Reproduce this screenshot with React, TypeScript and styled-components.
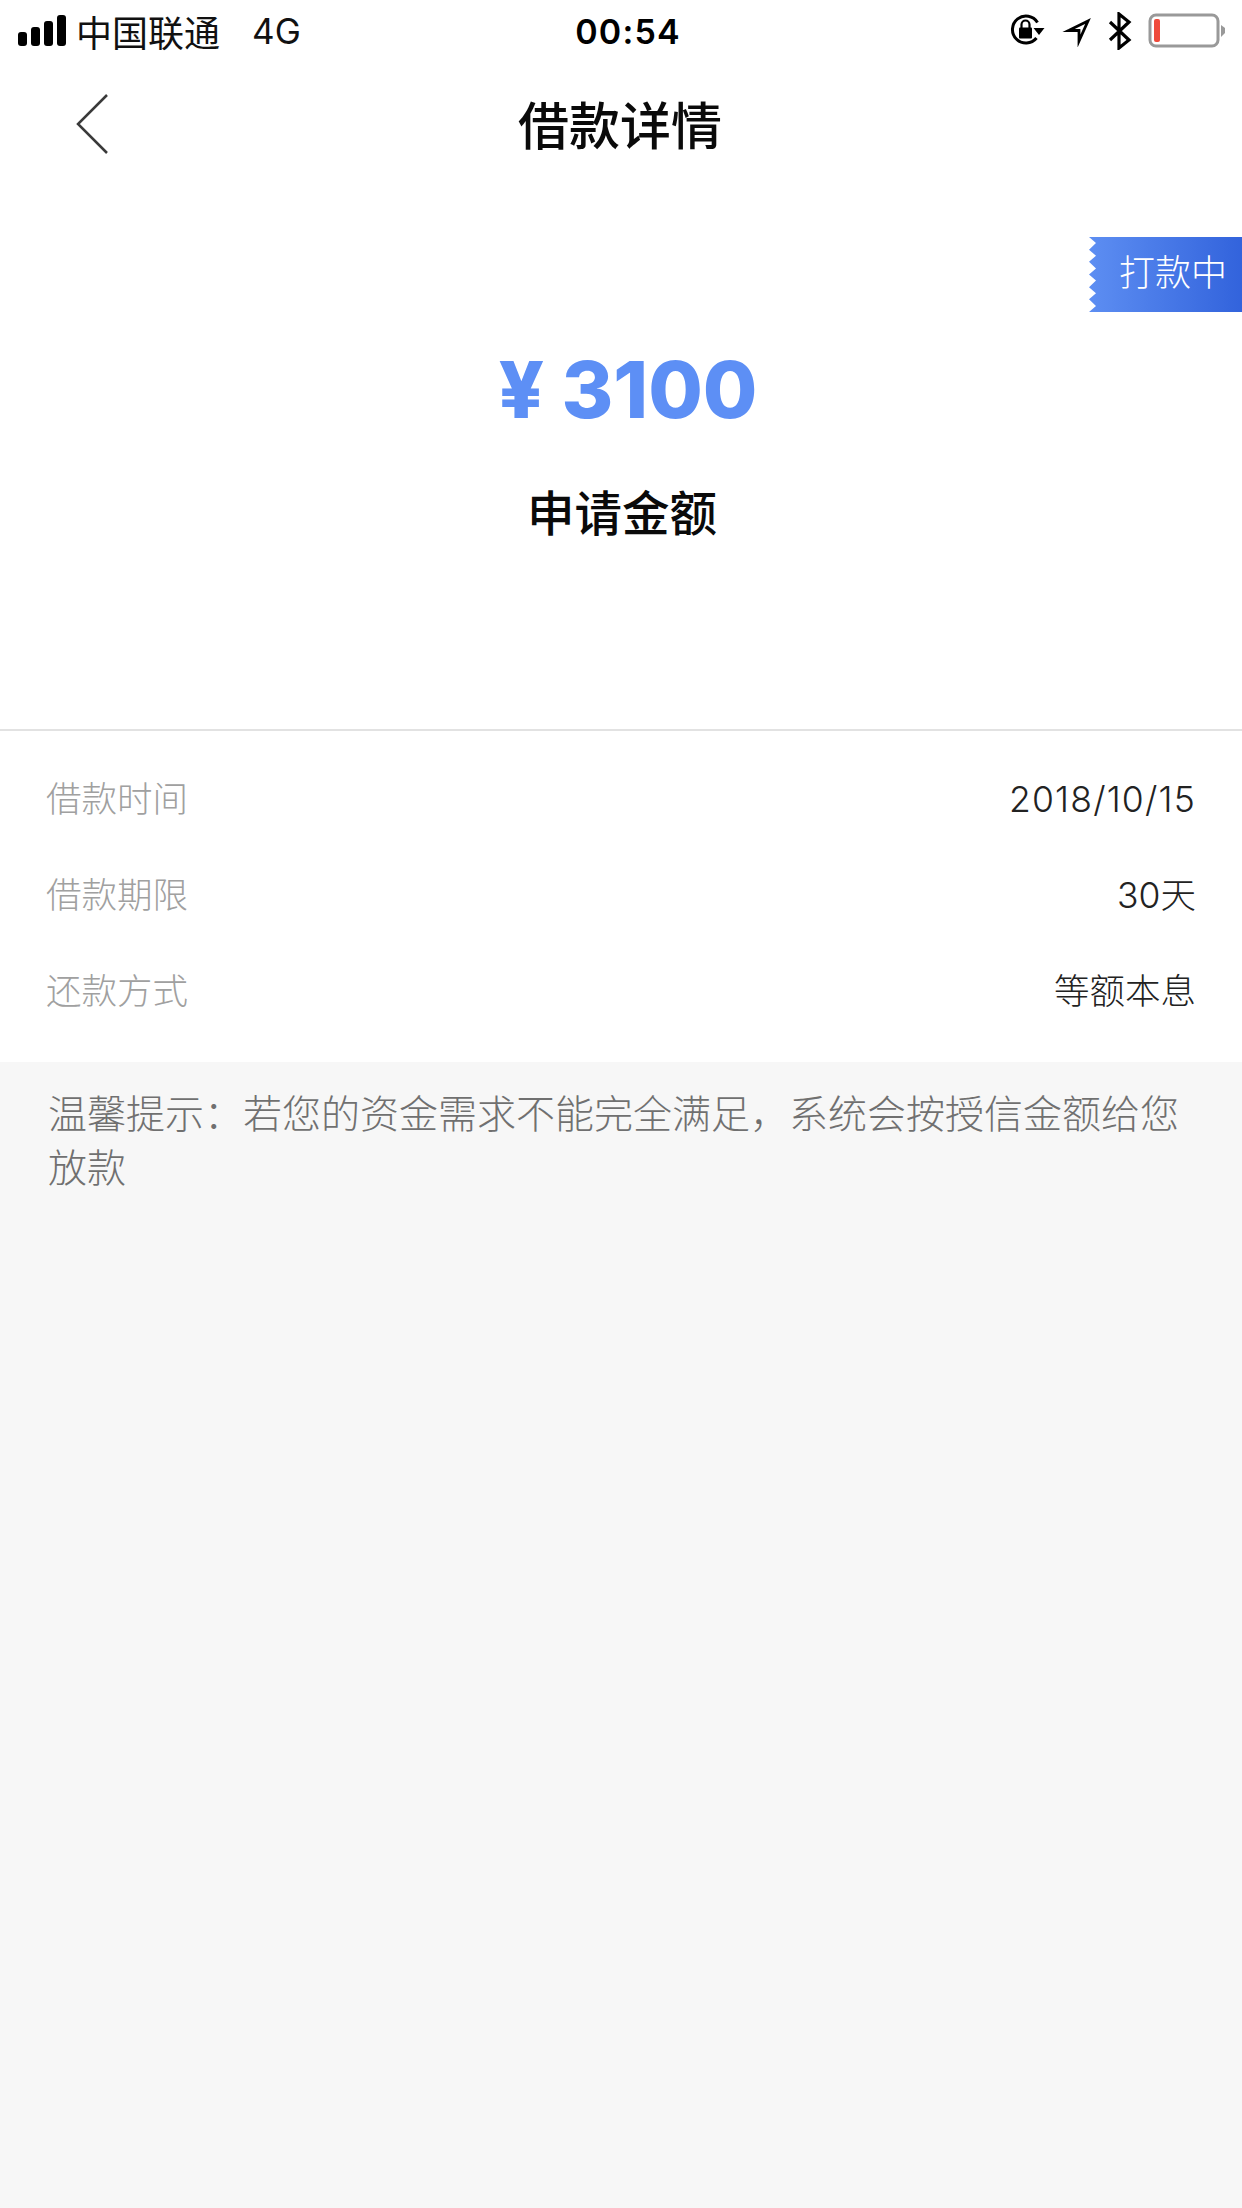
import React from "react";
import styled, { createGlobalStyle } from "styled-components";

const Global = createGlobalStyle`
  html, body { margin: 0; padding: 0; background: #f7f7f7; }
  body { font-family: Inter, "Noto Sans CJK SC", sans-serif; }
`;
const CJK = `"Noto Sans CJK SC", sans-serif`;
const Page = styled.div`
  width: 1242px; height: 2208px; display: flex; flex-direction: column; background: #f7f7f7; overflow: hidden;
`;
const Hero = styled.section`
  background: #fff; height: 729px; border-bottom: 2px solid #e2e2e2; box-sizing: content-box; display: flex; flex-direction: column; flex: none;
`;
const StatusBar = styled.div`
  height: 62px; display: grid; grid-template-columns: 1fr auto 1fr; align-items: center; padding: 0 16px 0 18px; color: #000;
`;
const StatusLeft = styled.div`display: flex; align-items: center;`;
const Carrier = styled.span`font: 400 36px ${CJK}; margin-left: 9px; color: #111; line-height: 62px;`;
const Network = styled.span`font: 400 35px Inter, sans-serif; margin-left: 32px; color: #111;`;
const Clock = styled.span`font: 600 34px Inter, sans-serif; letter-spacing: 1.2px; margin-left: 12px;`;
const StatusRight = styled.div`display: flex; align-items: center; justify-content: flex-end; gap: 16px;`;
const NavBar = styled.div`
  height: 128px; position: relative; display: flex; align-items: center; justify-content: center;
`;
const Back = styled.svg`position: absolute; left: 75px; top: 31px;`;
const Title = styled.h1`margin: 0; font: 500 51px/1 ${CJK}; color: #0a0a0a; transform: translate(-1px, -3px);`;
const Ribbon = styled.div`
  align-self: flex-end; width: 153px; height: 75px; margin-top: 47px; padding: 0 15px 10px 0; display: flex; align-items: center; justify-content: flex-end; box-sizing: border-box;
  color: #fff; font: 300 36px ${CJK};
  background: linear-gradient(90deg, #5d8ef2, #3263dc);
  clip-path: polygon(0 0,100% 0,100% 100%,0 100%,7px 92%,0 83%,7px 75%,0 67%,7px 58%,0 50%,7px 42%,0 33%,7px 25%,0 17%,7px 8%);
`;
const Amount = styled.div`
  margin-top: 30px; text-align: center; color: #5d8ff5; font: 800 79px/94px Inter, sans-serif; transform: translateX(7px);
`;
const AmountLabel = styled.div`
  margin-top: 45px; text-align: center; font: 500 47.500px/60px ${CJK}; color: #0a0a0a; transform: translateX(1px);
`;
const Details = styled.section`
  background: #fff; height: 331px; padding: 17px 46px 0; box-sizing: border-box; display: flex; flex-direction: column; flex: none;
`;
const Row = styled.div`
  height: 96px; display: flex; align-items: center; justify-content: space-between;
`;
const Label = styled.span`font: 300 35.500px ${CJK}; color: #a0a0a0;`;
const Value = styled.span<{ $spacing?: number }>`
  font: 300 35.500px/50px Inter, ${CJK}; color: #222; padding-top: 7px;
  letter-spacing: ${(p) => p.$spacing ?? 0}px;
`;
const Tip = styled.p`
  margin: 0; padding: 22px 48px; font: 300 39px/54px ${CJK}; color: #707070;
`;

const Bars = () => (
  <svg width="49" height="32" viewBox="0 0 49 32" fill="#000">
    <rect x="0" y="17" width="9" height="14" rx="3" />
    <rect x="13" y="12" width="9" height="19" rx="3" />
    <rect x="26" y="6" width="9" height="25" rx="3" />
    <rect x="39" y="0" width="9" height="31" rx="3" />
  </svg>
);
const RotationLock = () => (
  <svg width="36" height="36" viewBox="0 0 36 36" fill="none">
    <path d="M27.500 9.500A13.500 13.500 0 1 0 26.500 25" stroke="#000" strokeWidth="3" />
    <path d="M23.500 15h11l-5.500 7z" fill="#000" />
    <rect x="9" y="14.500" width="13" height="11" rx="1" fill="#000" />
    <path d="M11.500 15v-3.500a4 4 0 0 1 8 0v3.500" stroke="#000" strokeWidth="2.200" />
  </svg>
);
const Location = () => (
  <svg width="30" height="32" viewBox="0 0 30 32" fill="none">
    <path d="M26 6L6.500 15.500H17V26z" stroke="#000" strokeWidth="2.800" strokeLinejoin="miter" strokeMiterlimit="10" />
  </svg>
);
const Bluetooth = () => (
  <svg width="24" height="38" viewBox="0 0 24 38" fill="none">
    <path d="M2 10l19 18-10 8V2l10 8L2 28" stroke="#000" strokeWidth="3.200" />
  </svg>
);
const Battery = () => (
  <svg width="78" height="36" viewBox="0 0 78 36" fill="none">
    <rect x="2" y="2" width="68" height="31" rx="6" stroke="#999" strokeWidth="3" />
    <rect x="6" y="6" width="6" height="23" rx="2" fill="#ef4a3b" />
    <path d="M73 12l4 3v5l-4 4z" fill="#999" />
  </svg>
);

export default function App() {
  return (
    <Page>
      <Global />
      <Hero>
        <StatusBar>
          <StatusLeft>
            <Bars />
            <Carrier>中国联通</Carrier>
            <Network>4G</Network>
          </StatusLeft>
          <Clock>00:54</Clock>
          <StatusRight>
            <RotationLock />
            <Location />
            <Bluetooth />
            <Battery />
          </StatusRight>
        </StatusBar>
        <NavBar>
          <Back width="34" height="62" viewBox="0 0 34 62" fill="none">
            <path d="M32 2L3 31l29 29" stroke="#3a3a3a" strokeWidth="2.500" />
          </Back>
          <Title>借款详情</Title>
        </NavBar>
        <Ribbon>打款中</Ribbon>
        <Amount>¥ 3100</Amount>
        <AmountLabel>申请金额</AmountLabel>
      </Hero>
      <Details>
        <Row><Label>借款时间</Label><Value $spacing={1.2}>2018/10/15</Value></Row>
        <Row><Label>借款期限</Label><Value>30天</Value></Row>
        <Row><Label>还款方式</Label><Value>等额本息</Value></Row>
      </Details>
      <Tip>温馨提示：若您的资金需求不能完全满足，系统会按授信金额给您放款</Tip>
    </Page>
  );
}
